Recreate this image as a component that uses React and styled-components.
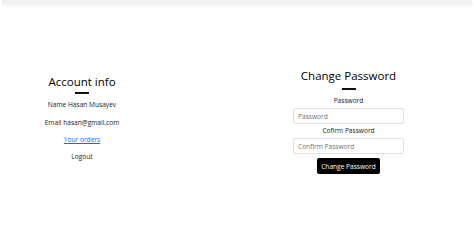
import React from 'react';
import styled, { createGlobalStyle } from 'styled-components';

const Global = createGlobalStyle`
  body {
    margin: 0;
    background: #fff;
    font-family: "Open Sans", "Noto Sans", sans-serif;
    color: #1a1a1a;
  }
`;

const TopBar = styled.div`
  height: 4px;
  margin: 0 2px;
  background: #f1f1f1;
  box-shadow: 0 2px 4px rgba(0, 0, 0, 0.06);
`;

const Page = styled.div`
  display: flex;
  align-items: flex-start;
`;

const Column = styled.div`
  width: ${({ w }) => w}px;
  margin-top: ${({ top }) => top}px;
  display: flex;
  flex-direction: column;
  align-items: center;
`;

const Spacer = styled.div`
  flex: 1;
`;

const Title = styled.h2`
  margin: 0;
  font-size: 11.5px;
  font-weight: 500;
  color: #000;
  line-height: 16px;
`;

const Dash = styled.div`
  width: 14px;
  height: 2px;
  background: #111;
  margin: ${({ m }) => m};
`;

const Line = styled.div`
  font-size: 6.6px;
  line-height: 10px;
  margin-bottom: ${({ mb }) => mb ?? 7}px;
`;

const Link = styled.a`
  font-size: 6.6px;
  line-height: 10px;
  color: #0d6efd;
  text-decoration: underline;
  margin-bottom: 7px;
`;

const Label = styled.label`
  font-size: 6.6px;
  line-height: 10px;
`;

const Input = styled.input`
  box-sizing: border-box;
  width: 111px;
  height: 16px;
  border: 1px solid #dee2e6;
  border-radius: 2px;
  padding: 0 4px;
  font-size: 6.6px;
  font-family: inherit;
  margin: 2px 0;
  &::placeholder { color: #6c757d; }
`;

const Button = styled.button`
  background: #000;
  color: #fff;
  border: none;
  border-radius: 2px;
  height: 16px;
  margin-top: 2px;
  padding: 0 4px;
  font-size: 6.6px;
  font-family: inherit;
`;

export default function App() {
  return (
    <>
      <Global />
      <TopBar />
      <Page>
        <Column w={164} top={70}>
          <Title>Account info</Title>
          <Dash m="2px 0 6px" />
          <Line mb={8}>Name Hasan Musayev</Line>
          <Line>Email hasan@gmail.com</Line>
          <Link href="#">Your orders</Link>
          <Line mb={0}>Logout</Line>
        </Column>
        <Spacer />
        <Column w={251} top={64}>
          <Title>Change Password</Title>
          <Dash m="4px 0 6px" />
          <Label>Password</Label>
          <Input placeholder="Password" />
          <Label>Cofirm Password</Label>
          <Input placeholder="Confirm Password" />
          <Button>Change Password</Button>
        </Column>
      </Page>
    </>
  );
}
